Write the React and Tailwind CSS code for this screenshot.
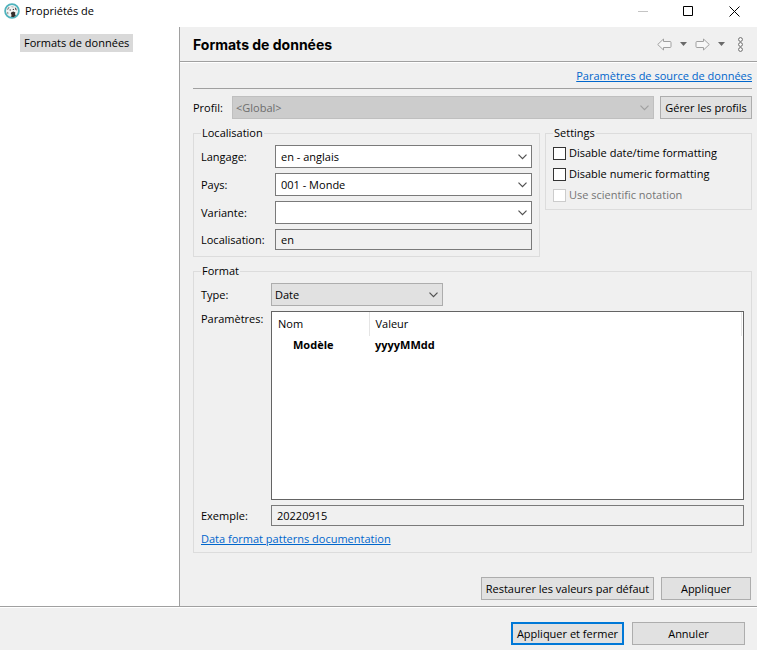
import React, { useState } from "react";

const Logo = () => (
  <svg width="16" height="16" viewBox="0 0 16 16" aria-hidden="true">
    <circle cx="8" cy="8" r="6.900" fill="#f3f4f4" stroke="#4fb3bd" strokeWidth="1.800" />
    <path d="M3 6.200 4.600 4l1 .5-1.200 1.800-1 .6z" fill="#8c8481" />
    <path d="M6.400 3.800 8.400 3.200l2.200.7-2 .5z" fill="#b9b5b3" />
    <path d="M10.800 4.200 12.200 5.200l.6 2.600-1.400-1.400z" fill="#4b4240" />
    <path d="M7.400 9.200 9.400 8.400l2 1-.4 1.600.8 1.800-2.400 1.400-2.400-.4.600-1.800-.8-1.400z" fill="#352d2b" />
    <path d="M3.200 8.800 4.400 9.600l-.2 1.600-1-.8z" fill="#8c8481" />
    <circle cx="6.200" cy="7" r=".7" fill="#4b4240" />
    <circle cx="9.400" cy="6.400" r=".7" fill="#4b4240" />
  </svg>
);

const Arrow = ({ className }) => (
  <svg width="15" height="13" viewBox="0 0 15 13" className={className} aria-hidden="true">
    <path
      d="M.7 6.500 6.500 1v2.500h6.500q1 0 1 1v4q0 1-1 1H6.500V12z"
      fill="#f7f7f7"
      stroke="#a0a0a0"
      strokeLinejoin="round"
    />
  </svg>
);

const Triangle = () => (
  <svg width="7" height="4" viewBox="0 0 7 4" aria-hidden="true">
    <path d="M0 0h7L3.500 4z" fill="#696969" />
  </svg>
);

const Select = ({ id, options, value, onChange, disabled, className }) => (
  <div className="relative min-w-0 flex-1">
    <select
      id={id}
      value={value}
      onChange={onChange}
      disabled={disabled}
      className={`block h-[23px] w-full appearance-none border pr-6 leading-4 opacity-100 ${className}`}
    >
      {options.map((option) => (
        <option key={option} value={option}>
          {option}
        </option>
      ))}
    </select>
    <svg
      width="9"
      height="6"
      viewBox="0 0 9 6"
      className={`pointer-events-none absolute right-[5px] top-[9px] ${disabled ? "text-[#a0a0a0]" : "text-[#505050]"}`}
      aria-hidden="true"
    >
      <path d="M.5.700l4 4 4-4" fill="none" stroke="currentColor" strokeWidth="1.200" />
    </svg>
  </div>
);

const Group = ({ title, className, children }) => (
  <fieldset className={`min-w-0 border border-[#dcdcdc] px-[7px] ${className}`}>
    <legend className="px-px leading-4">{title}</legend>
    {children}
  </fieldset>
);

const Button = ({ className, children }) => (
  <button type="button" className={`h-[23px] whitespace-nowrap bg-[#e1e1e1] leading-4 ${className}`}>
    {children}
  </button>
);

const locales = [
  { id: "langage", label: "Langage:", options: ["en - anglais"] },
  { id: "pays", label: "Pays:", options: ["001 - Monde"] },
  { id: "variante", label: "Variante:", options: [""] },
];

const App = () => {
  const [noDate, setNoDate] = useState(false);
  const [noNumeric, setNoNumeric] = useState(false);

  const checks = [
    { id: "date", label: "Disable date/time formatting", checked: noDate, set: setNoDate },
    { id: "numeric", label: "Disable numeric formatting", checked: noNumeric, set: setNoNumeric },
    { id: "scientific", label: "Use scientific notation", checked: false, disabled: true },
  ];

  return (
    <div className="flex min-h-screen flex-col bg-[#f0f0f0] font-['Open_Sans','Noto_Sans',sans-serif] text-[11px] leading-4 text-black">
      <header className="flex h-[27px] items-start justify-between bg-white pl-1 pr-[17px]">
        <div className="flex items-center gap-[5px] pt-[3px]">
          <Logo />
          <h1>Propriétés de</h1>
        </div>
        <div className="flex gap-[35px] pt-[6px]">
          <button type="button" aria-label="Réduire" disabled>
            <svg width="11" height="11" viewBox="0 0 11 11">
              <path d="M1 5.500h10" stroke="#c4c4c4" />
            </svg>
          </button>
          <button type="button" aria-label="Agrandir">
            <svg width="11" height="11" viewBox="0 0 11 11">
              <path d="M.5.500h9v9h-9z" fill="none" stroke="#000" />
            </svg>
          </button>
          <button type="button" aria-label="Fermer">
            <svg width="11" height="11" viewBox="0 0 11 11">
              <path d="M.5.500l10 10m0-10-10 10" stroke="#000" />
            </svg>
          </button>
        </div>
      </header>

      <div className="flex flex-1 border-b border-[#a0a0a0]">
        <nav className="w-[180px] shrink-0 border-r border-[#a0a0a0] bg-white pl-5 pt-[7px]">
          <a href="#formats" className="inline-block h-[18px] whitespace-nowrap bg-[#d9d9d9] px-1 leading-[18px]">
            Formats de données
          </a>
        </nav>

        <main className="flex min-w-0 flex-1 flex-col">
          <div className="flex h-[35px] items-center justify-between border-b border-[#a0a0a0] pl-[13px] pr-[13px]">
            <h2 className="pt-px font-['Inter',sans-serif] text-[14px] font-bold">Formats de données</h2>
            <div className="flex items-center gap-2">
              <button type="button" aria-label="Précédent">
                <Arrow />
              </button>
              <button type="button" aria-label="Historique précédent">
                <Triangle />
              </button>
              <button type="button" aria-label="Suivant">
                <Arrow className="rotate-180" />
              </button>
              <button type="button" aria-label="Historique suivant">
                <Triangle />
              </button>
              <button type="button" aria-label="Menu" className="pl-1">
                <svg width="7" height="15" viewBox="0 0 7 15">
                  <g fill="#fff" stroke="#696969">
                    <circle cx="3.500" cy="2.500" r="1.900" />
                    <circle cx="3.500" cy="7.500" r="1.900" />
                    <circle cx="3.500" cy="12.500" r="1.900" />
                  </g>
                </svg>
              </button>
            </div>
          </div>

          <div className="flex flex-1 flex-col border-t border-white pb-[6px] pl-[13px] pr-[5px]">
            <div className="flex h-[26px] items-center justify-end border-b border-[#a0a0a0]">
              <a href="#source" className="text-[#0066cc] underline">
                Paramètres de source de données
              </a>
            </div>

            <div className="flex items-center gap-[6px] pt-[7px]">
              <label htmlFor="profil" className="w-[33px]">
                Profil:
              </label>
              <Select
                id="profil"
                options={["<Global>"]}
                disabled
                className="border-[#bfbfbf] bg-[#cccccc] pl-[3px] text-[#6d6d6d]"
              />
              <Button className="w-[92px] border border-[#adadad]">Gérer les profils</Button>
            </div>

            <div className="flex items-start gap-[5px] pt-[6px]">
              <Group title="Localisation" className="flex-1 pb-[6px]">
                <div className="flex flex-col gap-[5px] pt-1">
                  {locales.map((row) => (
                    <div key={row.id} className="flex items-center">
                      <label htmlFor={row.id} className="w-[74px] shrink-0">
                        {row.label}
                      </label>
                      <Select id={row.id} options={row.options} className="border-[#7a7a7a] bg-white pl-[5px]" />
                    </div>
                  ))}
                  <div className="flex items-center">
                    <label htmlFor="locale" className="w-[74px] shrink-0">
                      Localisation:
                    </label>
                    <input
                      id="locale"
                      value="en"
                      readOnly
                      className="h-[21px] min-w-0 flex-1 border border-[#7a7a7a] px-[5px]"
                    />
                  </div>
                </div>
              </Group>

              <Group title="Settings" className="w-[207px] pb-[6px]">
                <div className="flex flex-col gap-[5px] pt-1">
                  {checks.map((item) => (
                    <label
                      key={item.id}
                      className={`flex items-center gap-[3px] whitespace-nowrap ${item.disabled ? "text-[#757575]" : ""}`}
                    >
                      <input
                        type="checkbox"
                        checked={item.checked}
                        disabled={item.disabled}
                        onChange={(e) => item.set(e.target.checked)}
                        className="size-[13px] appearance-none border border-[#333333] bg-white checked:bg-[#0078d7] disabled:border-[#cccccc]"
                      />
                      {item.label}
                    </label>
                  ))}
                </div>
              </Group>
            </div>

            <Group title="Format" className="mt-[6px] flex flex-1 flex-col pb-[5px]">
              <div className="flex flex-1 flex-col gap-[5px] pt-1">
                <div className="flex items-center">
                  <label htmlFor="type" className="w-[70px] shrink-0">
                    Type:
                  </label>
                  <div className="flex w-[172px]">
                    <Select id="type" options={["Date"]} className="border-[#adadad] bg-[#e1e1e1] pl-[3px]" />
                  </div>
                </div>
                <div className="flex flex-1">
                  <span id="params" className="w-[70px] shrink-0 whitespace-nowrap">
                    Paramètres:
                  </span>
                  <div className="min-h-[189px] flex-1 border border-[#646464] bg-white pr-px">
                    <table aria-labelledby="params" className="w-full table-fixed border-collapse text-left">
                      <thead>
                        <tr className="h-6">
                          <th className="w-[97px] border-r border-[#e5e5e5] pl-[6px] font-normal">Nom</th>
                          <th className="border-r border-[#e5e5e5] pl-[6px] font-normal">Valeur</th>
                        </tr>
                      </thead>
                      <tbody>
                        <tr className="h-[18px] font-bold">
                          <td className="pl-[21px]">Modèle</td>
                          <td className="pl-[6px]">yyyyMMdd</td>
                        </tr>
                      </tbody>
                    </table>
                  </div>
                </div>
                <div className="flex items-center">
                  <label htmlFor="exemple" className="w-[70px] shrink-0">
                    Exemple:
                  </label>
                  <input
                    id="exemple"
                    value="20220915"
                    readOnly
                    className="h-[21px] min-w-0 flex-1 border border-[#7a7a7a] px-[5px]"
                  />
                </div>
                <a href="#patterns" className="self-start text-[#0066cc] underline">
                  Data format patterns documentation
                </a>
              </div>
            </Group>

            <div className="flex justify-end gap-[7px] pr-px pt-6">
              <Button className="w-[173px] border border-[#adadad]">Restaurer les valeurs par défaut</Button>
              <Button className="w-[90px] border border-[#adadad]">Appliquer</Button>
            </div>
          </div>
        </main>
      </div>

      <footer className="flex justify-end gap-2 border-t border-white pb-[5px] pr-3 pt-[14px]">
        <Button className="w-[113px] border-2 border-[#0078d7]">Appliquer et fermer</Button>
        <Button className="w-[113px] border border-[#adadad]">Annuler</Button>
      </footer>
    </div>
  );
};

export default App;
